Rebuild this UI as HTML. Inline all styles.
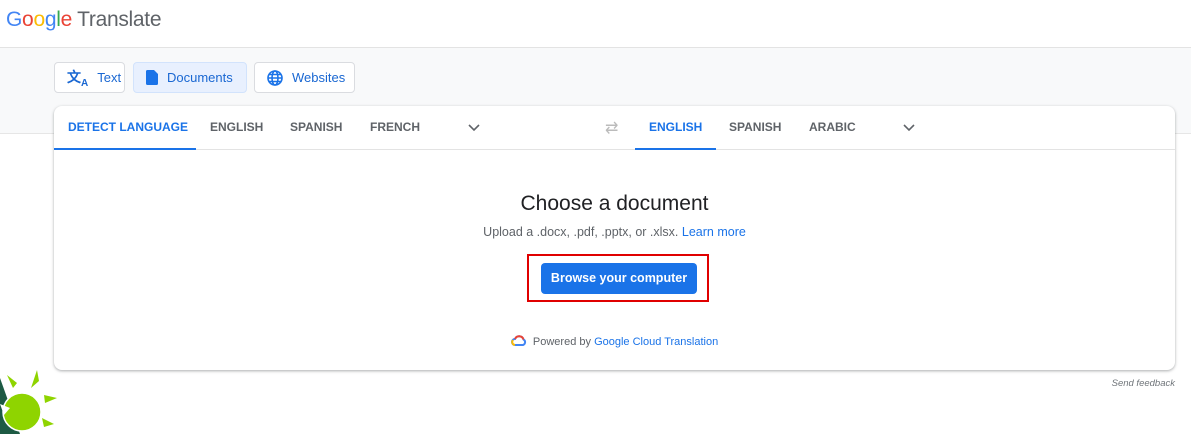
<!DOCTYPE html>
<html><head><style>
*{margin:0;padding:0;box-sizing:border-box}
body{width:1191px;height:434px;background:#fff;font-family:"Liberation Sans",Arial,sans-serif;position:relative;overflow:hidden}
.hdr{height:48px;border-bottom:1px solid #e3e3e3;position:relative}
.logo{position:absolute;left:6px;top:8px;font-size:21px;letter-spacing:-0.3px}
.band{position:absolute;top:48px;left:0;width:1191px;height:86px;background:#f8f9fa;border-bottom:1px solid #e6e6e6}
.btn{position:absolute;top:62px;height:31px;border:1px solid #dadce0;border-radius:4px;background:#fff;font-size:13px;color:#1967d2;display:flex;align-items:center;padding-left:12px;gap:9px}
.btn.sel{background:#e8f0fe;border-color:#d2e3fc}
.card{position:absolute;left:54px;top:106px;width:1121px;height:264px;background:#fff;border-radius:8px;box-shadow:0 1px 3px rgba(60,64,67,.3),0 1px 2px rgba(60,64,67,.15)}
.tabs{height:44px;border-bottom:1px solid #e3e3e3;position:relative}
.t{position:absolute;top:0;height:44px;line-height:43px;font-size:12px;color:#5f6368;font-weight:bold}
.t.a{color:#1a73e8;border-bottom:2px solid #1a73e8}
.c{position:absolute;width:100%;text-align:center}
</style></head><body>
<div class="hdr"><div class="logo"><span style="color:#4285f4">G</span><span style="color:#ea4335">o</span><span style="color:#fbbc05">o</span><span style="color:#4285f4">g</span><span style="color:#34a853">l</span><span style="color:#ea4335">e</span> <span style="color:#5f6368">Translate</span></div></div>
<div class="band"></div>
<div class="btn" style="left:54px;width:71px"><span style="font-size:14px;font-weight:bold">文<sub style="font-size:10px">A</sub></span>Text</div>
<div class="btn sel" style="left:133px;width:114px"><svg width="12" height="15" viewBox="0 0 12 15"><path d="M0 1.5Q0 0 1.5 0H8L12 4V13.5Q12 15 10.5 15H1.5Q0 15 0 13.5Z" fill="#1a73e8"/></svg>Documents</div>
<div class="btn" style="left:254px;width:101px"><svg width="16" height="16" viewBox="0 0 16 16" fill="none" stroke="#1a73e8" stroke-width="1.6"><circle cx="8" cy="8" r="7"/><ellipse cx="8" cy="8" rx="3" ry="7"/><path d="M1 8h14M2 4.5h12M2 11.5h12"/></svg>Websites</div>
<div class="card">
<div class="tabs">
<div class="t a" style="left:0;width:142px;padding-left:14px">DETECT LANGUAGE</div>
<div class="t" style="left:156px">ENGLISH</div>
<div class="t" style="left:236px">SPANISH</div>
<div class="t" style="left:316px">FRENCH</div>
<svg style="position:absolute;left:414px;top:18px" width="12" height="8"><path d="M1 1l5 5 5-5" stroke="#5f6368" stroke-width="1.6" fill="none"/></svg>
<div style="position:absolute;left:551px;top:12px;color:#bbb;font-size:16px">⇄</div>
<div class="t a" style="left:581px;width:81px;padding-left:14px">ENGLISH</div>
<div class="t" style="left:675px">SPANISH</div>
<div class="t" style="left:755px">ARABIC</div>
<svg style="position:absolute;left:849px;top:18px" width="12" height="8"><path d="M1 1l5 5 5-5" stroke="#5f6368" stroke-width="1.6" fill="none"/></svg>
</div>
<div class="c" style="top:86px;font-size:21px;color:#202124">Choose a document</div>
<div class="c" style="top:119px;font-size:12.5px;color:#5f6368">Upload a .docx, .pdf, .pptx, or .xlsx. <span style="color:#1a73e8">Learn more</span></div>
<div style="position:absolute;left:473px;top:148px;width:182px;height:48px;border:2px solid #e00000"></div>
<div style="position:absolute;left:487px;top:157px;width:156px;height:31px;background:#1a73e8;border-radius:4px;color:#fff;font-size:12.5px;font-weight:bold;text-align:center;line-height:31px">Browse your computer</div>
<div class="c" style="top:229px;font-size:11px;color:#5f6368"><svg width="16" height="11" viewBox="0 0 16 11" style="vertical-align:-1px"><path d="M4 10A3 3 0 0 1 4 4 4.5 4.5 0 0 1 12.5 4.5 3 3 0 0 1 12 10Z" fill="none" stroke="#4285f4" stroke-width="2"/><path d="M4 4A4.5 4.5 0 0 1 12.5 4.5" fill="none" stroke="#ea4335" stroke-width="2"/><path d="M4 10A3 3 0 0 1 2 5" fill="none" stroke="#fbbc05" stroke-width="2"/></svg>&nbsp; Powered by <span style="color:#1a73e8">Google Cloud Translation</span></div>
</div>
<div style="position:absolute;right:16px;top:378px;font-size:9.5px;font-style:italic;color:#70757a">Send feedback</div>
<svg style="position:absolute;left:0;top:370px" width="60" height="64" viewBox="0 0 60 64"><path d="M0 8L20 64H0Z" fill="#1d5a44"/><circle cx="22" cy="42" r="19" fill="#8fd400" stroke="#fff" stroke-width="1.5"/><path d="M7 5l10 8-4 5z M37 0l2 11-8 7z M44 25l13 3-12 5z M42 48l12 6-10 3z" fill="#8fd400"/><path d="M0 34l10 4-6 7z" fill="#fff"/></svg>
</body></html>
